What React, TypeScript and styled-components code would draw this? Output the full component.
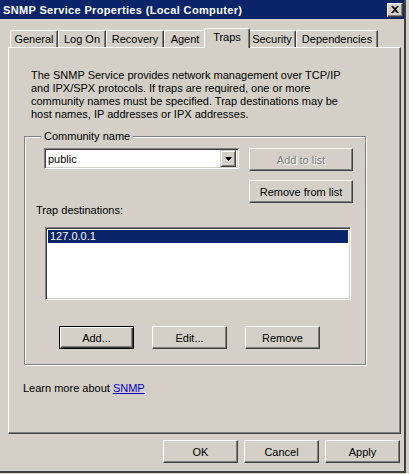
import React from 'react';
import styled, { createGlobalStyle, css } from 'styled-components';

const GlobalStyle = createGlobalStyle`
  html, body {
    margin: 0;
    padding: 0;
    background: #d4d0c8;
  }
  body {
    font-family: "Liberation Sans", Arial, sans-serif;
    font-size: 11px;
    color: #000;
  }
`;

const Window = styled.div`
  width: 404px;
  height: 471px;
  background: #d4d0c8;
  border-right: 2px solid #404040;
  border-bottom: 2px solid #404040;
  display: flex;
  flex-direction: column;
`;

const TitleBar = styled.div`
  height: 19px;
  background: #0a246a;
  display: flex;
  align-items: center;
  justify-content: space-between;
  padding: 0 1px 0 3px;
`;

const Title = styled.span`
  color: #fff;
  font-weight: bold;
  font-size: 11px;
  letter-spacing: 0.35px;
`;

const CaptionButton = styled.div`
  width: 16px;
  height: 14px;
  box-sizing: border-box;
  background: #d4d0c8;
  border: 1px solid;
  border-color: #fff #404040 #404040 #fff;
  box-shadow: inset -1px -1px #808080;
  display: flex;
  align-items: center;
  justify-content: center;
`;

const Body = styled.div`
  flex: 1;
  display: flex;
  flex-direction: column;
  padding: 9px 0 0 8px;
`;

const TabStrip = styled.div`
  display: flex;
  align-items: flex-end;
  height: 19px;
  padding-left: 2px;
`;

const Tab = styled.div<{ $w: number; $active?: boolean }>`
  width: ${p => p.$w}px;
  height: 17px;
  box-sizing: border-box;
  background: #d4d0c8;
  border-top: 1px solid #fff;
  border-left: 1px solid #fff;
  border-right: 1px solid #404040;
  border-radius: 2px 2px 0 0;
  box-shadow: inset -1px 0 #808080;
  display: flex;
  align-items: center;
  justify-content: center;
  padding-bottom: 1px;
  white-space: nowrap;
  ${p => p.$active && css`
    height: 20px;
    margin: 0 -2px -1px;
    position: relative;
    z-index: 1;
    padding-bottom: 4px;
  `}
`;

const Panel = styled.div`
  width: 393px;
  height: 387px;
  box-sizing: border-box;
  border: 1px solid;
  border-color: #fff #404040 #404040 #fff;
  box-shadow: inset -1px -1px #808080;
  display: flex;
  flex-direction: column;
  padding: 21px 0 0 15px;
`;

const Description = styled.p`
  margin: 0 0 0 7px;
  line-height: 13px;
`;

const GroupBox = styled.fieldset`
  width: 342px;
  box-sizing: border-box;
  margin: 9px 0 0 0;
  padding: 5px 0 15px 11px;
  border: 1px solid #808080;
  box-shadow: 1px 1px 0 #fff, inset 1px 1px 0 #fff;
  display: flex;
  flex-direction: column;
`;

const Legend = styled.legend`
  margin-left: 5px;
  padding: 0 3px;
  line-height: 13px;
  background: #d4d0c8;
`;

const ControlGrid = styled.div`
  display: grid;
  grid-template-columns: 195px 104px;
  column-gap: 10px;
  row-gap: 9px;
  margin-left: 8px;
  align-items: start;
`;

const Sunken = css`
  box-sizing: border-box;
  background: #fff;
  border: 1px solid;
  border-color: #808080 #fff #fff #808080;
  box-shadow: inset 1px 1px #404040, inset -1px -1px #d4d0c8;
`;

const Combo = styled.div`
  ${Sunken};
  height: 21px;
  display: flex;
  align-items: center;
  padding: 2px 2px 2px 3px;
`;

const ComboText = styled.span`
  flex: 1;
`;

const DropButton = styled.div`
  width: 16px;
  height: 17px;
  box-sizing: border-box;
  background: #d4d0c8;
  border: 1px solid;
  border-color: #d4d0c8 #404040 #404040 #d4d0c8;
  box-shadow: inset 1px 1px #fff, inset -1px -1px #808080;
  display: flex;
  align-items: center;
  justify-content: center;
`;

const Button = styled.button<{ $w?: number; $default?: boolean }>`
  width: ${p => p.$w ?? 75}px;
  height: 23px;
  box-sizing: border-box;
  padding: 0;
  font-family: "Liberation Sans", Arial, sans-serif;
  font-size: 11px;
  color: #000;
  background: #d4d0c8;
  border: 1px solid;
  border-color: #fff #404040 #404040 #fff;
  box-shadow: inset -1px -1px #808080;
  &:disabled {
    color: #808080;
    text-shadow: 1px 1px #fff;
  }
  ${p => p.$default && css`
    border-color: #000;
    box-shadow: inset 1px 1px #fff, inset -1px -1px #404040, inset -2px -2px #808080;
  `}
`;

const FieldLabel = styled.div`
  margin-top: 1px;
  line-height: 13px;
`;

const ListBox = styled.div`
  ${Sunken};
  width: 306px;
  height: 73px;
  margin: 10px 0 0 9px;
  padding: 2px;
`;

const ListItem = styled.div<{ $selected?: boolean }>`
  height: 13px;
  line-height: 13px;
  padding-left: 2px;
  ${p => p.$selected && css`
    background: #0a246a;
    color: #fff;
  `}
`;

const ButtonRow = styled.div`
  display: flex;
  gap: 18px;
  margin: 26px 0 0 23px;
`;

const LearnMore = styled.p`
  margin: 17px 0 0 -1px;
  line-height: 13px;
`;

const Link = styled.a`
  color: #0000cc;
  text-decoration: underline;
`;

const Footer = styled.div`
  display: flex;
  justify-content: flex-end;
  gap: 6px;
  padding: 6px 4px 0 0;
`;

const tabs = [
  { label: 'General', w: 48 },
  { label: 'Log On', w: 48 },
  { label: 'Recovery', w: 58 },
  { label: 'Agent', w: 42 },
  { label: 'Traps', w: 46, active: true },
  { label: 'Security', w: 48 },
  { label: 'Dependencies', w: 82 },
];

export default function App() {
  return (
    <>
      <GlobalStyle />
      <Window>
        <TitleBar>
          <Title>SNMP Service Properties (Local Computer)</Title>
          <CaptionButton>
            <svg width="8" height="7" viewBox="0 0 8 7">
              <path d="M0 0h2l2 2 2-2h2L5 3.5 8 7H6L4 5 2 7H0l3-3.5z" fill="#000" />
            </svg>
          </CaptionButton>
        </TitleBar>
        <Body>
          <TabStrip>
            {tabs.map(t => (
              <Tab key={t.label} $w={t.w} $active={t.active}>
                {t.label}
              </Tab>
            ))}
          </TabStrip>
          <Panel>
            <Description>
              The SNMP Service provides network management over TCP/IP
              <br />
              and IPX/SPX protocols. If traps are required, one or more
              <br />
              community names must be specified. Trap destinations may be
              <br />
              host names, IP addresses or IPX addresses.
            </Description>
            <GroupBox>
              <Legend>Community name</Legend>
              <ControlGrid>
                <Combo>
                  <ComboText>public</ComboText>
                  <DropButton>
                    <svg width="7" height="4" viewBox="0 0 7 4">
                      <path d="M0 0h7L3.5 4z" fill="#000" />
                    </svg>
                  </DropButton>
                </Combo>
                <Button $w={104} disabled>
                  Add to list
                </Button>
                <span />
                <Button $w={104}>Remove from list</Button>
              </ControlGrid>
              <FieldLabel>Trap destinations:</FieldLabel>
              <ListBox>
                <ListItem $selected>127.0.0.1</ListItem>
              </ListBox>
              <ButtonRow>
                <Button $default>Add...</Button>
                <Button>Edit...</Button>
                <Button>Remove</Button>
              </ButtonRow>
            </GroupBox>
            <LearnMore>
              Learn more about <Link href="#">SNMP</Link>
            </LearnMore>
          </Panel>
          <Footer>
            <Button>OK</Button>
            <Button>Cancel</Button>
            <Button>Apply</Button>
          </Footer>
        </Body>
      </Window>
    </>
  );
}
